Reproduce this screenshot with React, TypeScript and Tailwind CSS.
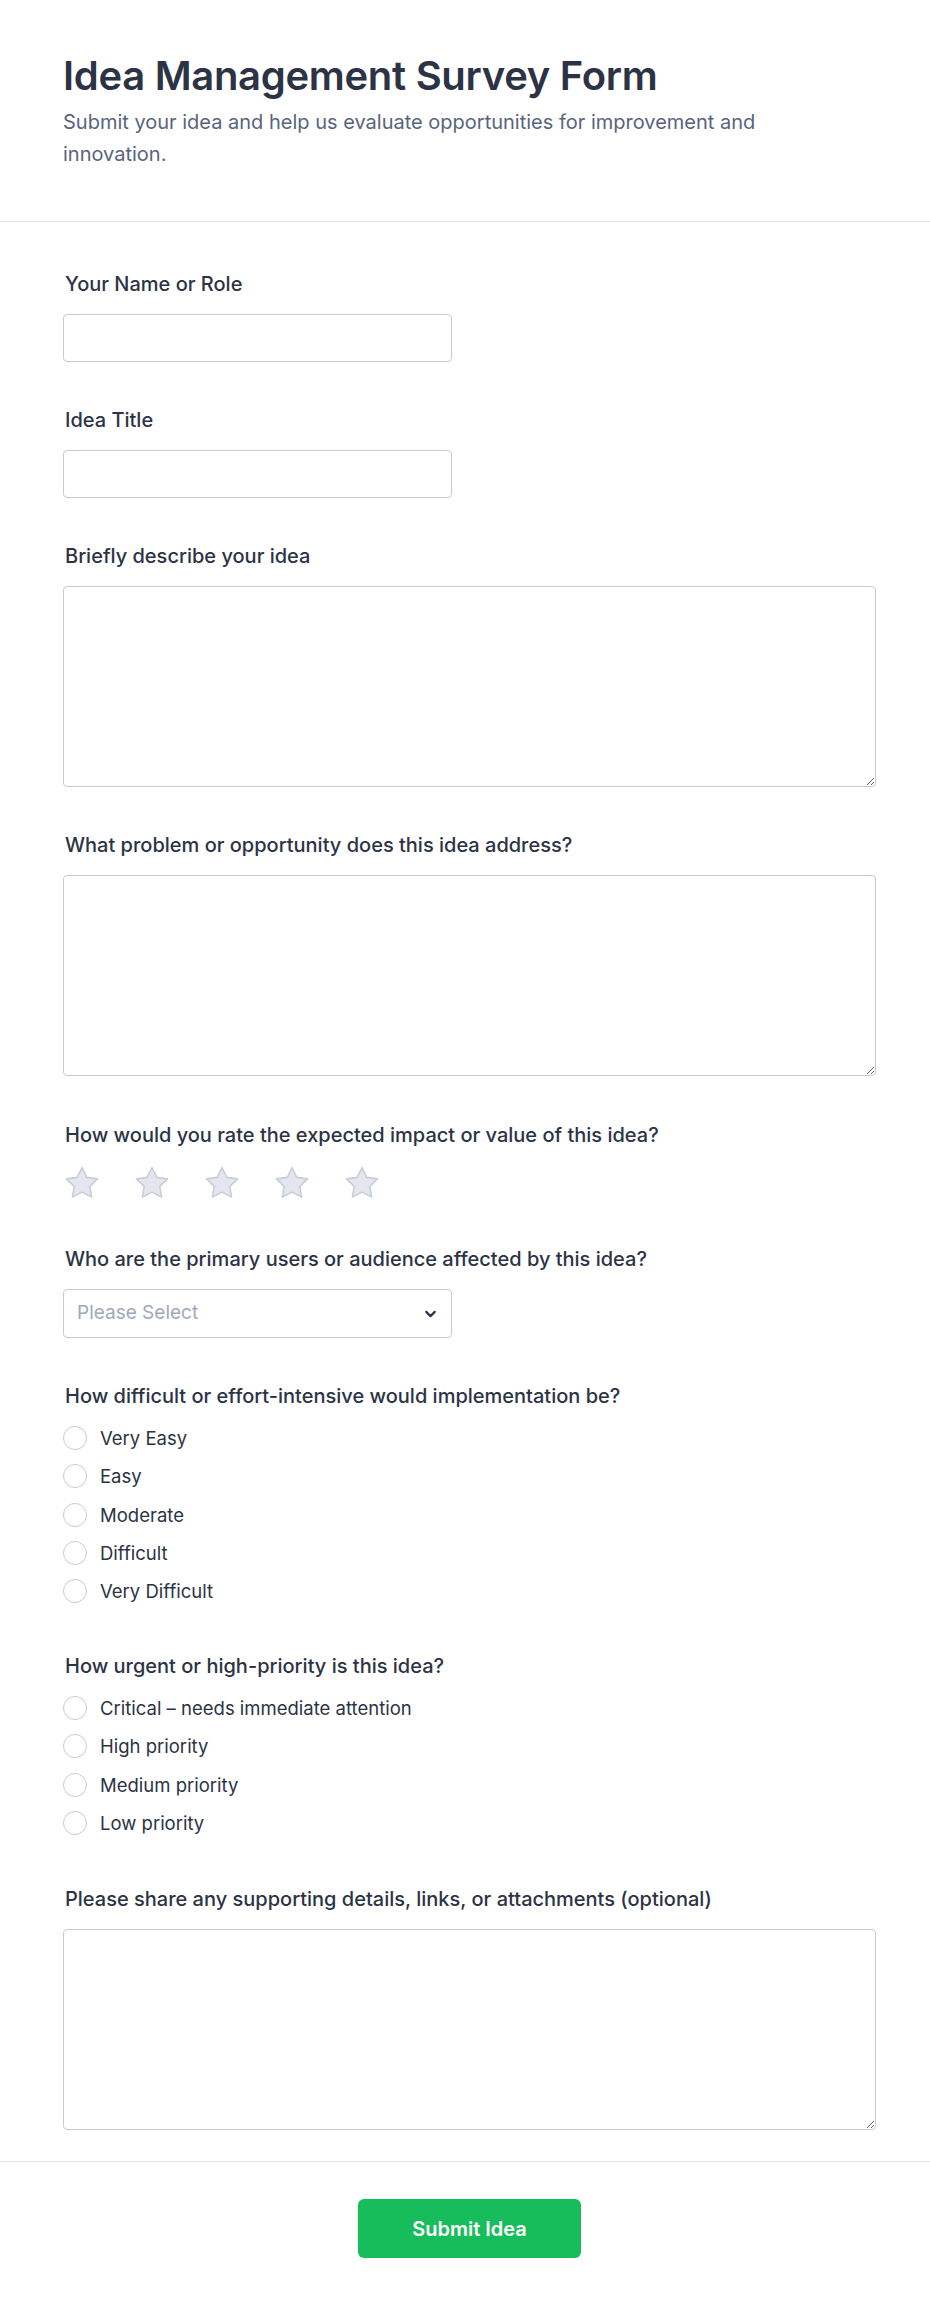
import { ChevronDown } from 'lucide-react'

const font = { fontFamily: 'Inter, "Noto Sans", sans-serif' }

function Label({ children, className = 'mb-4' }: { children: React.ReactNode; className?: string }) {
  return (
    <label className={`block pl-[2px] text-[20px] font-medium leading-7 text-[#2c3345] ${className}`}>
      {children}
    </label>
  )
}

function TextInput() {
  return (
    <input
      type="text"
      className="block h-[48px] w-[389px] rounded-[4px] border border-[#c3cad8] bg-white px-3 text-[18px] text-[#2c3345] outline-none"
    />
  )
}

function TextArea() {
  return (
    <textarea className="block h-[201px] w-full rounded-[4px] border border-[#c3cad8] bg-white px-3 py-2 text-[18px] text-[#2c3345] outline-none" />
  )
}

function Star() {
  return (
    <svg width="38" height="36" viewBox="0 0 24 23" className="block">
      <path
        d="M12 1.6l3.05 6.3 6.9.95-5 4.85 1.2 6.85L12 17.3l-6.15 3.25 1.2-6.85-5-4.85 6.9-.95z"
        fill="#e3e6ee"
        stroke="#c9cdd8"
        strokeWidth="1"
        strokeLinejoin="round"
      />
    </svg>
  )
}

function RadioGroup({ name, options }: { name: string; options: string[] }) {
  return (
    <div className="flex flex-col gap-[14.3px]">
      {options.map((o) => (
        <label key={o} className="flex h-6 items-center gap-[13px]">
          <span className="block h-6 w-6 rounded-full border border-[#c3cad8] bg-white" />
          <input type="radio" name={name} className="hidden" />
          <span className="text-[18.5px] leading-6 text-[#2c3345]">{o}</span>
        </label>
      ))}
    </div>
  )
}

export default function App() {
  return (
    <div className="min-h-screen bg-white" style={font}>
      <header className="border-b border-[#e3e5ee] pb-[51px] pl-[63px] pr-[54px] pt-[52px]">
        <h1 className="text-[40px] font-semibold leading-[48px] tracking-[-0.3px] text-[#2c3345]">
          Idea Management Survey Form
        </h1>
        <p className="mt-[6px] max-w-[740px] text-[20px] leading-8 text-[#57647e]">
          Submit your idea and help us evaluate opportunities for improvement and innovation.
        </p>
      </header>

      <form className="pl-[63px] pr-[54px] pt-[48px]" onSubmit={(e) => e.preventDefault()}>
        <div className="mb-[44px]">
          <Label>Your Name or Role</Label>
          <TextInput />
        </div>

        <div className="mb-[44px]">
          <Label>Idea Title</Label>
          <TextInput />
        </div>

        <div className="mb-[44px]">
          <Label>Briefly describe your idea</Label>
          <TextArea />
        </div>

        <div className="mb-[45px]">
          <Label>What problem or opportunity does this idea address?</Label>
          <TextArea />
        </div>

        <div className="mb-[44px]">
          <Label className="mb-4">How would you rate the expected impact or value of this idea?</Label>
          <div className="flex gap-[32px]">
            {[0, 1, 2, 3, 4].map((i) => (
              <Star key={i} />
            ))}
          </div>
        </div>

        <div className="mb-[44px]">
          <Label>Who are the primary users or audience affected by this idea?</Label>
          <div className="relative w-[389px]">
            <select
              defaultValue=""
              className="block h-[49px] w-full appearance-none rounded-[4px] border border-[#c3cad8] bg-white pl-[13px] pr-10 text-[19px] text-[#a0a9ba] outline-none"
            >
              <option value="" disabled>
                Please Select
              </option>
              <option>Employees</option>
              <option>Customers</option>
              <option>Management</option>
              <option>Partners</option>
            </select>
            <ChevronDown
              className="pointer-events-none absolute right-[13px] top-1/2 h-[17px] w-[17px] -translate-y-1/2 text-[#2c3345]"
              strokeWidth={3}
            />
          </div>
        </div>

        <div className="mb-[49px]">
          <Label className="mb-[16px]">How difficult or effort-intensive would implementation be?</Label>
          <RadioGroup name="difficulty" options={['Very Easy', 'Easy', 'Moderate', 'Difficult', 'Very Difficult']} />
        </div>

        <div className="mb-[50px]">
          <Label className="mb-[16px]">How urgent or high-priority is this idea?</Label>
          <RadioGroup
            name="urgency"
            options={['Critical – needs immediate attention', 'High priority', 'Medium priority', 'Low priority']}
          />
        </div>

        <div className="pb-[31px]">
          <Label>Please share any supporting details, links, or attachments (optional)</Label>
          <TextArea />
        </div>
      </form>

      <footer className="flex justify-center border-t border-[#e3e5ee] pb-[50px] pl-[63px] pr-[54px] pt-[37px]">
        <button
          type="button"
          className="h-[59px] w-[223px] rounded-[6px] bg-[#18bd5b] text-[20px] font-semibold text-white"
        >
          Submit Idea
        </button>
      </footer>
    </div>
  )
}
